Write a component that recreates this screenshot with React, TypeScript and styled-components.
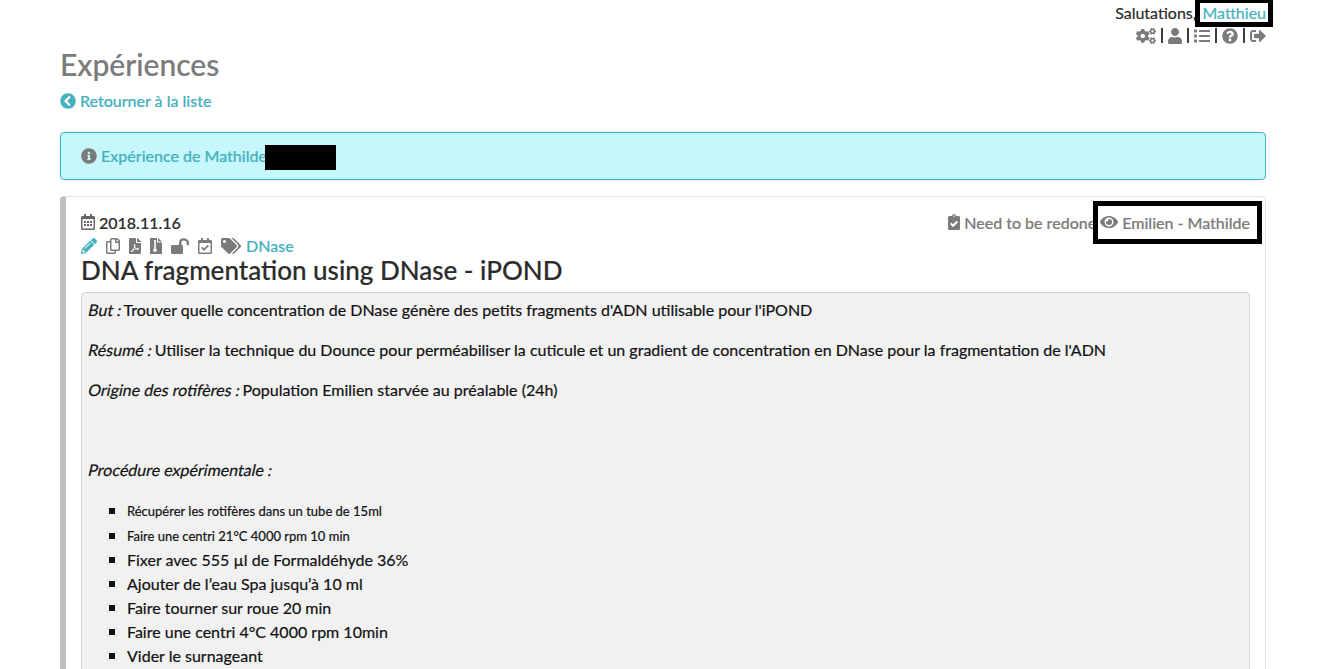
import React from 'react';
import styled, { createGlobalStyle } from 'styled-components';
import {
  FaCogs,
  FaUser,
  FaList,
  FaQuestionCircle,
  FaSignOutAlt,
  FaChevronCircleLeft,
  FaInfoCircle,
  FaRegCalendarAlt,
  FaPencilAlt,
  FaRegCopy,
  FaFilePdf,
  FaRegCalendarCheck,
  FaTags,
  FaClipboardCheck,
  FaEye,
} from 'react-icons/fa';

const GlobalStyle = createGlobalStyle`
  html, body {
    margin: 0;
    padding: 0;
    height: 669px;
    overflow: hidden;
    background: #fff;
    font-family: Lato, "Liberation Sans", sans-serif;
    font-size: 16px;
    color: #2c2c2c;
    -webkit-text-stroke: 0.2px;
  }
`;

// all the icons are 16px high, only the width changes
const sized = (Icon: React.ComponentType<any>, width: number) => styled(Icon)`
  flex: none;
  width: ${width}px;
  height: 16px;
`;

const CogsIcon = sized(FaCogs, 20);
const UserIcon = sized(FaUser, 14);
const ListIcon = sized(FaList, 16);
const HelpIcon = sized(FaQuestionCircle, 16);
const LogoutIcon = sized(FaSignOutAlt, 16);
const BackIcon = sized(FaChevronCircleLeft, 16);
const InfoIcon = sized(FaInfoCircle, 16);
const CalendarIcon = sized(FaRegCalendarAlt, 14);
const ClipboardIcon = sized(FaClipboardCheck, 12);
const EyeIcon = sized(FaEye, 18);
const PencilIcon = sized(FaPencilAlt, 16);
const CopyIcon = sized(FaRegCopy, 14);
const PdfIcon = sized(FaFilePdf, 12);
const CheckDateIcon = sized(FaRegCalendarCheck, 14);
const TagsIcon = sized(FaTags, 20);

const ThermoFile = () => (
  <svg width="12" height="16" viewBox="0 0 12 16" fill="currentColor">
    <path d="M0 0h7v4.5h5V16H0z" />
    <path d="M8 0l4 3.5H8z" />
    <rect x="4.2" y="2" width="1.6" height="9" fill="#fff" />
    <circle cx="5" cy="12.2" r="1.8" fill="#fff" />
  </svg>
);

const OpenLock = () => (
  <svg width="18" height="16" viewBox="0 0 18 16" fill="currentColor">
    <rect x="0" y="7" width="12" height="9" rx="1.2" />
    <path d="M8 7V4.4C8 2 9.9 0.2 12.6 0.2 15.4 0.2 18 2 18 4.6V7h-2.4V4.8c0-1.3-1.2-2.2-2.9-2.2-1.6 0-2.3 1-2.3 2.1V7z" />
  </svg>
);

const App: React.FC = () => {
  return (
    <Page>
      <GlobalStyle />
      <UserBar>
        <Greeting>
          Salutations, <UserName>Matthieu</UserName>
        </Greeting>
        <UserMenu>
          <CogsIcon />
          <Sep />
          <UserIcon />
          <Sep />
          <ListIcon />
          <Sep />
          <HelpIcon />
          <Sep />
          <LogoutIcon />
        </UserMenu>
      </UserBar>

      <Title>Expériences</Title>
      <BackLink>
        <BackIcon />
        Retourner à la liste
      </BackLink>

      <InfoBanner>
        <InfoIcon />
        <InfoText>Expérience de Mathilde</InfoText>
        <Redacted />
      </InfoBanner>

      <Card>
        <CardTop>
          <DateLine>
            <CalendarIcon />
            2018.11.16
          </DateLine>
          <Meta>
            <MetaItem>
              <ClipboardIcon />
              Need to be redone
            </MetaItem>
            <Reviewers>
              <EyeIcon />
              Emilien - Mathilde
            </Reviewers>
          </Meta>
        </CardTop>

        <Actions>
          <PencilIcon color="#45b1bd" />
          <CopyIcon />
          <PdfIcon />
          <ThermoFile />
          <OpenLock />
          <CheckDateIcon />
          <TagsIcon />
          <TagLink>DNase</TagLink>
        </Actions>

        <ExperimentTitle>DNA fragmentation using DNase - iPOND</ExperimentTitle>

        <Body>
          <Para>
            <Label>But :</Label>{' '}
            Trouver quelle concentration de DNase génère des petits fragments d'ADN utilisable pour l'iPOND
          </Para>
          <Para>
            <Label>Résumé :</Label>{' '}
            Utiliser la technique du Dounce pour perméabiliser la cuticule et un gradient de concentration en DNase pour la fragmentation de l'ADN
          </Para>
          <Para>
            <Label>Origine des rotifères :</Label>{' '}
            Population Emilien starvée au préalable (24h)
          </Para>
          <Para>&nbsp;</Para>
          <Para>
            <Label>Procédure expérimentale :</Label>
          </Para>
          <Steps>
            <Step small>Récupérer les rotifères dans un tube de 15ml</Step>
            <Step small>Faire une centri 21°C 4000 rpm 10 min</Step>
            <Step>Fixer avec 555 µl de Formaldéhyde 36%</Step>
            <Step>Ajouter de l’eau Spa jusqu’à 10 ml</Step>
            <Step>Faire tourner sur roue 20 min</Step>
            <Step>Faire une centri 4°C 4000 rpm 10min</Step>
            <Step>Vider le surnageant</Step>
          </Steps>
        </Body>
      </Card>
    </Page>
  );
};

export default App;

const Page = styled.div`
  padding: 4px 53px 0 60px;
  height: 665px;
  overflow: hidden;
`;

const UserBar = styled.div`
  display: flex;
  flex-direction: column;
  align-items: flex-end;
`;

const Greeting = styled.div`
  line-height: 18px;
  color: #2c2c2c;
`;

const UserName = styled.span`
  color: #45b1bd;
  outline: 5px solid #000;
  padding: 0 2px;
  margin-right: -2px;
`;

const UserMenu = styled.div`
  display: flex;
  align-items: center;
  gap: 5px;
  height: 19px;
  margin-top: 4px;
  color: #7b7b7b;
`;

const Sep = styled.span`
  width: 2px;
  height: 15px;
  background: #3a3f47;
`;

const Title = styled.h1`
  margin: 1px 0 0;
  font-size: 30px;
  line-height: 36px;
  font-weight: 500;
  color: #7b7b7b;
`;

const BackLink = styled.a`
  display: flex;
  align-items: center;
  gap: 4px;
  box-sizing: border-box;
  margin-top: 9px;
  height: 20px;
  padding-bottom: 2px;
  font-weight: 500;
  color: #45b1bd;

  svg {
    margin-top: 2px;
  }
`;

const InfoBanner = styled.div`
  position: relative;
  display: flex;
  align-items: center;
  gap: 4px;
  box-sizing: border-box;
  height: 48px;
  margin-top: 21px;
  padding: 0 20px 2px;
  background: #c6f7fd;
  border: 1px solid #45b1bd;
  border-radius: 4px;

  svg {
    margin-top: 2px;
    color: #7b7b7b;
  }
`;

const InfoText = styled.span`
  font-weight: 500;
  color: #45b1bd;
`;

const Redacted = styled.div`
  position: absolute;
  left: 204px;
  top: 12px;
  width: 71px;
  height: 25px;
  background: #000;
`;

const Card = styled.section`
  box-sizing: border-box;
  margin-top: 16px;
  padding: 16px 15px 0 15px;
  height: 480px;
  border: 1px solid #e2e2e2;
  border-left: 6px solid #bfbfbf;
  border-radius: 4px;
`;

const CardTop = styled.div`
  display: flex;
  justify-content: space-between;
  align-items: center;
  box-sizing: border-box;
  height: 20px;
  padding-bottom: 2px;
`;

const DateLine = styled.div`
  display: flex;
  align-items: center;
  gap: 4px;
  font-weight: 500;
  color: #2c2c2c;

  svg {
    color: #666;
  }
`;

const Meta = styled.div`
  display: flex;
  align-items: center;
  gap: 2px;
  font-weight: 500;
  color: #7b7b7b;
`;

const MetaItem = styled.span`
  display: flex;
  align-items: center;
  gap: 4px;
`;

const Reviewers = styled.span`
  display: flex;
  align-items: center;
  gap: 4px;
  box-sizing: border-box;
  height: 33px;
  margin-right: -7px;
  padding: 0 7px 0 2px;
  outline: 5px solid #000;
`;

const Actions = styled.div`
  display: flex;
  align-items: center;
  gap: 9px;
  height: 18px;
  margin-top: 4px;
  color: #7b7b7b;
`;

const TagLink = styled.a`
  margin: 0 0 2px -4px;
  font-weight: 500;
  color: #45b1bd;
`;

const ExperimentTitle = styled.h2`
  margin: 0;
  font-size: 26px;
  line-height: 30px;
  font-weight: 500;
  color: #2c2c2c;
`;

const Body = styled.div`
  margin-top: 7px;
  padding: 7px 6px 0;
  height: 400px;
  box-sizing: border-box;
  background: #f1f1f1;
  border: 1px solid #d4d4d4;
  border-radius: 4px;
`;

const Para = styled.p`
  margin: 0 0 20px;
  line-height: 20px;
  color: #111;
`;

// the reference slants the upright face, it does not use the true italic
const Label = styled.span`
  display: inline-block;
  margin-right: -1px;
  transform: skewX(-12deg);
  transform-origin: 0 65%;
`;

const Steps = styled.ul`
  margin: 0;
  padding: 0 0 0 21px;
  list-style: none;
`;

const Step = styled.li<{ small?: boolean }>`
  display: flex;
  align-items: center;
  gap: 12px;
  box-sizing: border-box;
  height: 24px;
  padding-bottom: ${({ small }) => (small ? '2px' : '0')};
  font-size: ${({ small }) => (small ? '13px' : '16px')};
  line-height: 24px;
  color: #111;

  &:nth-child(2) {
    padding-bottom: 0;
  }

  &::before {
    content: '';
    flex: none;
    width: 6px;
    height: 6px;
    background: #111;
  }
`;
